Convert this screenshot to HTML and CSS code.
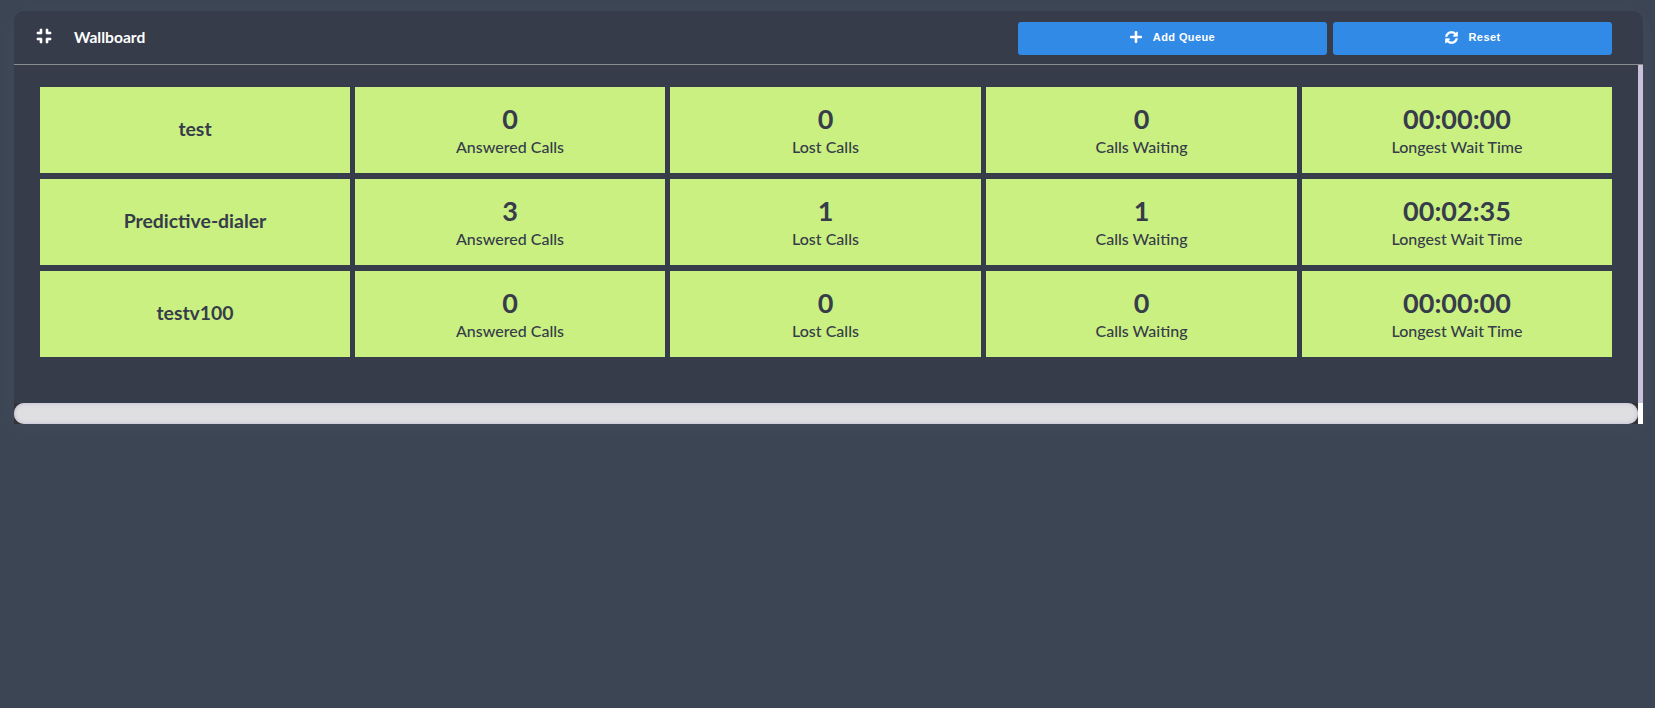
FILE: index.html
```html
<!DOCTYPE html>
<html lang="en">
<head>
<meta charset="utf-8">
<title>Wallboard</title>
<link rel="stylesheet" href="styles.css">
</head>
<body>
<main class="panel">
  <header class="topbar">
    <div class="title-group">
      <svg class="compress" viewBox="0 0 448 512" aria-hidden="true"><path d="M436 192H312c-13.300 0-24-10.700-24-24V44c0-6.600 5.400-12 12-12h40c6.600 0 12 5.400 12 12v84h84c6.600 0 12 5.400 12 12v40c0 6.600-5.400 12-12 12zm-276-24V44c0-6.600-5.400-12-12-12h-40c-6.600 0-12 5.400-12 12v84H12c-6.600 0-12 5.400-12 12v40c0 6.600 5.400 12 12 12h124c13.300 0 24-10.700 24-24zm0 300V344c0-13.300-10.700-24-24-24H12c-6.600 0-12 5.400-12 12v40c0 6.600 5.400 12 12 12h84v84c0 6.600 5.400 12 12 12h40c6.600 0 12-5.400 12-12zm192 0v-84h84c6.600 0 12-5.400 12-12v-40c0-6.600-5.400-12-12-12H312c-13.300 0-24 10.700-24 24v124c0 6.600 5.400 12 12 12h40c6.600 0 12-5.400 12-12z"/></svg>
      <h1 class="title">Wallboard</h1>
    </div>
    <div class="actions">
      <button class="btn btn-add"><svg class="plus" viewBox="0 0 448 512" aria-hidden="true"><path d="M416 208H272V64c0-17.670-14.330-32-32-32h-32c-17.670 0-32 14.330-32 32v144H32c-17.670 0-32 14.330-32 32v32c0 17.670 14.330 32 32 32h144v144c0 17.670 14.330 32 32 32h32c17.670 0 32-14.330 32-32V304h144c17.670 0 32-14.330 32-32v-32c0-17.670-14.330-32-32-32z"/></svg><span>Add Queue</span></button>
      <button class="btn btn-reset"><svg class="sync" viewBox="0 0 512 512" aria-hidden="true"><path d="M370.720 133.280C339.458 104.008 298.888 87.962 255.848 88c-77.458.068-144.328 53.178-162.791 126.850-1.344 5.363-6.122 9.150-11.651 9.150H24.103c-7.498 0-13.194-6.807-11.807-14.176C33.933 94.924 134.813 8 256 8c66.448 0 126.791 26.136 171.315 68.685L463.030 40.970C478.149 25.851 504 36.559 504 57.941V192c0 13.255-10.745 24-24 24H345.941c-21.382 0-32.090-25.851-16.971-40.971l41.750-41.750zM32 296h134.059c21.382 0 32.090 25.851 16.971 40.971l-41.750 41.750c31.262 29.273 71.835 45.319 114.876 45.280 77.418-.070 144.315-53.144 162.787-126.849 1.344-5.363 6.122-9.150 11.651-9.150h57.304c7.498 0 13.194 6.807 11.807 14.176C478.067 417.076 377.187 504 256 504c-66.448 0-126.791-26.136-171.315-68.685L48.970 471.030C33.851 486.149 8 475.441 8 454.059V320c0-13.255 10.745-24 24-24z"/></svg><span>Reset</span></button>
    </div>
  </header>
  <div class="body-row">
    <div class="board">
      <div class="cell name">test</div>
      <div class="cell"><strong>0</strong><span>Answered Calls</span></div>
      <div class="cell"><strong>0</strong><span>Lost Calls</span></div>
      <div class="cell"><strong>0</strong><span>Calls Waiting</span></div>
      <div class="cell"><strong>00:00:00</strong><span>Longest Wait Time</span></div>

      <div class="cell name">Predictive-dialer</div>
      <div class="cell"><strong>3</strong><span>Answered Calls</span></div>
      <div class="cell"><strong>1</strong><span>Lost Calls</span></div>
      <div class="cell"><strong>1</strong><span>Calls Waiting</span></div>
      <div class="cell"><strong>00:02:35</strong><span>Longest Wait Time</span></div>

      <div class="cell name">testv100</div>
      <div class="cell"><strong>0</strong><span>Answered Calls</span></div>
      <div class="cell"><strong>0</strong><span>Lost Calls</span></div>
      <div class="cell"><strong>0</strong><span>Calls Waiting</span></div>
      <div class="cell"><strong>00:00:00</strong><span>Longest Wait Time</span></div>
    </div>
    <div class="vscroll"></div>
  </div>
  <div class="hscroll-row">
    <div class="hscroll-track"><div class="hscroll-thumb"></div></div>
    <div class="corner"></div>
  </div>
</main>
</body>
</html>
```
FILE: styles.css
```css
* { box-sizing: border-box; }
html, body { height: 100%; }
body {
  margin: 0;
  padding: 11px 12px 0 14px;
  background: #3b4554;
  font-family: "Lato", "Noto Sans", sans-serif;
  overflow: hidden;
}
.panel {
  background: #363c49;
  border-radius: 10px 10px 0 0;
  box-shadow: 0 4px 24px rgba(255, 255, 255, 0.035);
}
.topbar {
  height: 54px;
  border-bottom: 1px solid #8a8d90;
  display: flex;
  align-items: flex-start;
  justify-content: space-between;
  padding: 11px 31px 0 23px;
}
.title-group {
  display: flex;
  align-items: center;
  height: 28px;
  gap: 23px;
}
.compress {
  width: 14px;
  height: 16px;
  fill: #fff;
  stroke: #fff;
  stroke-width: 20;
  overflow: visible;
}
.title {
  margin: 0;
  padding-top: 1px;
  font-size: 15.6px;
  font-weight: 700;
  color: #fff;
}
.actions { display: flex; gap: 6px; }
.btn {
  height: 33px;
  border: 0;
  border-radius: 3px;
  background: #308ae6;
  color: #fff;
  font-family: "Liberation Sans", Arial, sans-serif;
  font-size: 11px;
  font-weight: 700;
  letter-spacing: 0.4px;
  display: flex;
  align-items: center;
  justify-content: center;
  padding: 0 0 3px;
}
.btn-add { width: 309px; gap: 11px; }
.btn-reset { width: 279px; gap: 11px; }
.plus { width: 12px; height: 14px; fill: #fff; }
.sync { width: 13px; height: 13px; fill: #fff; stroke: #fff; stroke-width: 12; }
.body-row { display: flex; height: 338px; }
.board {
  flex: 1;
  display: grid;
  grid-template-columns: 310px 310px 311px 311px 310px;
  grid-auto-rows: 86px;
  gap: 6px 5px;
  padding: 22px 26px 0;
  align-content: start;
}
.cell {
  background: #caf082;
  color: #363c49;
  display: flex;
  flex-direction: column;
  align-items: center;
  justify-content: center;
  text-align: center;
}
.cell strong {
  font-size: 27px;
  line-height: 32px;
  font-weight: 700;
  margin-bottom: 2px;
}
.cell span {
  font-size: 16px;
  line-height: 20px;
  font-weight: 500;
}
.cell.name {
  font-size: 19.4px;
  font-weight: 700;
  padding-bottom: 4px;
}
.vscroll {
  width: 5px;
  background: #c9c2da;
}
.hscroll-row { display: flex; height: 21px; }
.hscroll-track {
  flex: 1;
  background: #333;
}
.hscroll-thumb {
  height: 100%;
  border-radius: 10px;
  background: #dfdfe1;
  box-shadow: inset 0 0 4px #bdb5d2;
}
.corner {
  width: 5px;
  background: #fff;
}
```
